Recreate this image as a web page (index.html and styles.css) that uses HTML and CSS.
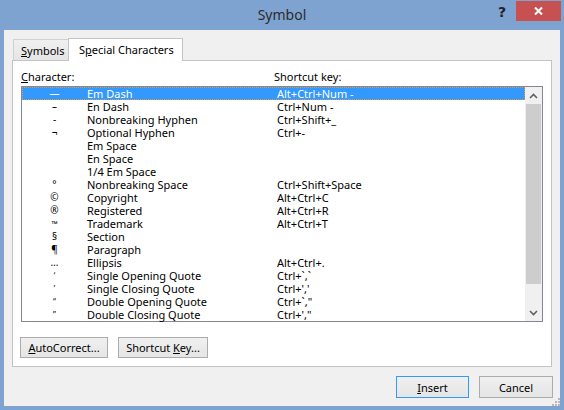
FILE: index.html
```html
<!DOCTYPE html>
<html lang="en">
<head>
    <meta charset="UTF-8">
    <title>Symbol</title>
    <link rel="stylesheet" href="styles.css">
</head>
<body>
    <div class="window">
        <div class="titlebar">
            <div></div>
            <div class="title">Symbol</div>
            <div class="caption-buttons">
                <span class="help">?</span>
                <span class="close">
                    <svg width="45" height="20" viewBox="0 0 45 20">
                        <path d="M19 6.5 L26 13.5 M26 6.5 L19 13.5" stroke="#fff" stroke-width="2" fill="none"/>
                    </svg>
                </span>
            </div>
        </div>

        <div class="client">
            <div class="tabs">
                <div class="tab"><u>S</u>ymbols</div>
                <div class="tab active">S<u>p</u>ecial Characters</div>
            </div>

            <div class="panel">
                <div class="labels">
                    <span class="label-char"><u>C</u>haracter:</span>
                    <span>Shortcut key:</span>
                </div>

                <div class="list">
                    <div class="rows">
                        <div class="row selected"><span class="ch">—</span><span>Em Dash</span><span>Alt+Ctrl+Num -</span></div>
                        <div class="row"><span class="ch">–</span><span>En Dash</span><span>Ctrl+Num -</span></div>
                        <div class="row"><span class="ch">-</span><span>Nonbreaking Hyphen</span><span>Ctrl+Shift+_</span></div>
                        <div class="row"><span class="ch">¬</span><span>Optional Hyphen</span><span>Ctrl+-</span></div>
                        <div class="row"><span class="ch"></span><span>Em Space</span><span></span></div>
                        <div class="row"><span class="ch"></span><span>En Space</span><span></span></div>
                        <div class="row"><span class="ch"></span><span>1/4 Em Space</span><span></span></div>
                        <div class="row"><span class="ch">°</span><span>Nonbreaking Space</span><span>Ctrl+Shift+Space</span></div>
                        <div class="row"><span class="ch">©</span><span>Copyright</span><span>Alt+Ctrl+C</span></div>
                        <div class="row"><span class="ch">®</span><span>Registered</span><span>Alt+Ctrl+R</span></div>
                        <div class="row"><span class="ch small">™</span><span>Trademark</span><span>Alt+Ctrl+T</span></div>
                        <div class="row"><span class="ch">§</span><span>Section</span><span></span></div>
                        <div class="row"><span class="ch">¶</span><span>Paragraph</span><span></span></div>
                        <div class="row"><span class="ch">…</span><span>Ellipsis</span><span>Alt+Ctrl+.</span></div>
                        <div class="row"><span class="ch small">‘</span><span>Single Opening Quote</span><span>Ctrl+`,`</span></div>
                        <div class="row"><span class="ch small">’</span><span>Single Closing Quote</span><span>Ctrl+','</span></div>
                        <div class="row"><span class="ch small">“</span><span>Double Opening Quote</span><span>Ctrl+`,"</span></div>
                        <div class="row"><span class="ch small">”</span><span>Double Closing Quote</span><span>Ctrl+',"</span></div>
                    </div>

                    <div class="scrollbar">
                        <div class="arrow">
                            <svg width="17" height="17" viewBox="0 0 17 17">
                                <polyline points="5,11 8.5,7.5 12,11" stroke="#606060" stroke-width="1.6" fill="none"/>
                            </svg>
                        </div>
                        <div class="thumb"></div>
                        <div class="track"></div>
                        <div class="arrow">
                            <svg width="17" height="17" viewBox="0 0 17 17">
                                <polyline points="5,7 8.5,10.5 12,7" stroke="#606060" stroke-width="1.6" fill="none"/>
                            </svg>
                        </div>
                    </div>
                </div>

                <div class="panel-buttons">
                    <button class="btn btn-autocorrect"><u>A</u>utoCorrect...</button>
                    <button class="btn btn-shortcut">Shortcut <u>K</u>ey...</button>
                </div>
            </div>

            <div class="dialog-buttons">
                <button class="btn btn-default"><u>I</u>nsert</button>
                <button class="btn btn-cancel">Cancel</button>
            </div>

            <svg class="grip" width="10" height="10" viewBox="0 0 10 10">
                <rect x="8" y="2" width="2" height="2" fill="#b8b8b8"/>
                <rect x="5" y="5" width="2" height="2" fill="#b8b8b8"/>
                <rect x="8" y="5" width="2" height="2" fill="#b8b8b8"/>
                <rect x="2" y="8" width="2" height="2" fill="#b8b8b8"/>
                <rect x="5" y="8" width="2" height="2" fill="#b8b8b8"/>
                <rect x="8" y="8" width="2" height="2" fill="#b8b8b8"/>
            </svg>
        </div>
    </div>
</body>
</html>
```

FILE: styles.css
```css
body {
    margin: 0;
    padding: 0;
    font-family: "Noto Sans", sans-serif;
    font-size: 11px;
    color: #000;
}
u {
    text-underline-offset: 1px;
}
.window {
    width: 564px;
    height: 410px;
    background-color: #7fa3d1;
    display: flex;
    flex-direction: column;
}
.titlebar {
    height: 30px;
    display: grid;
    grid-template-columns: 1fr auto 1fr;
}
.title {
    font-size: 14px;
    line-height: 30px;
    color: #2b2b2b;
}
.caption-buttons {
    display: flex;
    justify-content: flex-end;
    align-items: flex-start;
}
.help {
    font-family: "DejaVu Sans", sans-serif;
    font-weight: bold;
    font-size: 14px;
    line-height: 14px;
    color: #222;
    margin-top: 5px;
    margin-right: 10px;
}
.close {
    width: 45px;
    height: 20px;
    margin-top: 1px;
    margin-right: 3px;
    background-color: #c75050;
}
.close svg {
    display: block;
}
.client {
    position: relative;
    flex: 1;
    margin: 0 4px 4px;
    background-color: #f0f0f0;
}

/* tab strip */
.tabs {
    display: flex;
    align-items: flex-end;
    height: 30px;
    padding-left: 9px;
}
.tab {
    box-sizing: border-box;
    width: 56px;
    height: 21px;
    padding: 4px 0 0 7px;
    line-height: 13px;
    border: 1px solid #d0d0d0;
    border-bottom: none;
    background: linear-gradient(#f0f0f0, #e5e5e5);
}
.tab.active {
    position: relative;
    z-index: 1;
    width: 115px;
    height: 23px;
    margin-left: -1px;
    margin-bottom: -1px;
    padding: 4px 0 0 10px;
    background: #fff;
    border-color: #c4c4c4;
}
.panel {
    margin: 0 8px;
    padding: 9px 8px 8px;
    background: #fff;
    border: 1px solid #c4c4c4;
}
.labels {
    display: flex;
    line-height: 13px;
}
.label-char {
    width: 253px;
}

/* list box */
.list {
    box-sizing: border-box;
    height: 236px;
    margin-top: 3px;
    border: 1px solid #828790;
    display: flex;
}
.rows {
    flex: 1;
}
.row {
    display: grid;
    grid-template-columns: 65px 190px 1fr;
    height: 13px;
    line-height: 13px;
    white-space: nowrap;
}
.row .ch {
    text-align: center;
    font-size: 10px;
}
.row .ch.small {
    font-size: 8px;
}
.row.selected {
    background-color: #3399ff;
    color: #fff;
    outline: 1px dotted #d89a50;
    outline-offset: -1px;
}
.scrollbar {
    width: 17px;
    background-color: #f0f0f0;
    display: flex;
    flex-direction: column;
}
.arrow {
    height: 17px;
}
.arrow svg {
    display: block;
}
.thumb {
    height: 180px;
    margin: 0 1px;
    background-color: #cdcdcd;
}
.track {
    flex: 1;
}

/* buttons */
.btn {
    box-sizing: border-box;
    height: 21px;
    padding: 0;
    font-family: "Noto Sans", sans-serif;
    font-size: 11px;
    color: #000;
    background: linear-gradient(#f0f0f0, #e5e5e5);
    border: 1px solid #acacac;
}
.panel-buttons {
    display: flex;
    gap: 10px;
    margin-top: 15px;
    margin-left: -1px;
}
.btn-autocorrect {
    width: 88px;
}
.btn-shortcut {
    width: 90px;
}
.dialog-buttons {
    display: flex;
    justify-content: flex-end;
    gap: 10px;
    margin-top: 9px;
    padding-right: 7px;
}
.dialog-buttons .btn {
    height: 22px;
}
.btn-default {
    width: 73px;
    border-color: #3399ff;
}
.btn-cancel {
    width: 74px;
}
.grip {
    position: absolute;
    right: 0;
    bottom: 0;
}
```
